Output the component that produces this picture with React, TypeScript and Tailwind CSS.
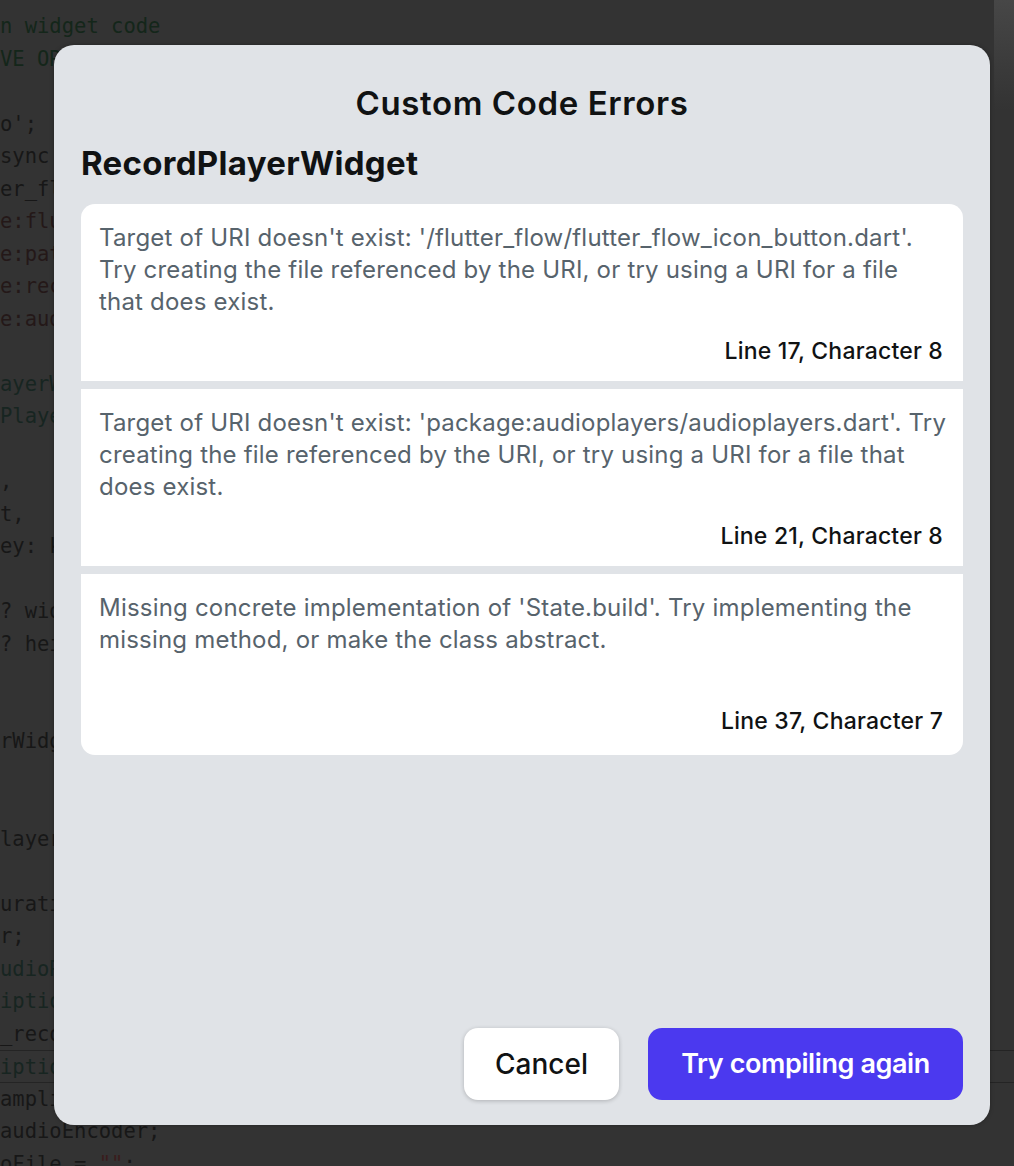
const codeLines: { text: string; color: string }[] = [
  { text: 'n widget code', color: 'text-[#14261a]' },
  { text: 'VE OR MODIFY THE CODE ABOVE!', color: 'text-[#14261a]' },
  { text: '', color: '' },
  { text: "o';", color: 'text-[#171717]' },
  { text: "sync';", color: 'text-[#171717]' },
  { text: "er_flow/flutter_flow_icon_button.dart';", color: 'text-[#171717]' },
  { text: "e:flutter_sound/flutter_sound.dart';", color: 'text-[#241818]' },
  { text: "e:path_provider/path_provider.dart';", color: 'text-[#241818]' },
  { text: "e:record/record.dart';", color: 'text-[#241818]' },
  { text: "e:audioplayers/audioplayers.dart';", color: 'text-[#241818]' },
  { text: '', color: '' },
  { text: 'ayerWidget extends StatefulWidget {', color: 'text-[#172521]' },
  { text: 'PlayerWidget({', color: 'text-[#172521]' },
  { text: '', color: '' },
  { text: ',', color: 'text-[#171717]' },
  { text: 't,', color: 'text-[#171717]' },
  { text: 'ey: key);', color: 'text-[#171717]' },
  { text: '', color: '' },
  { text: '? width;', color: 'text-[#171717]' },
  { text: '? height;', color: 'text-[#171717]' },
  { text: '', color: '' },
  { text: '', color: '' },
  { text: 'rWidget> createState() =>', color: 'text-[#171717]' },
  { text: '', color: '' },
  { text: '', color: '' },
  { text: 'layer;', color: 'text-[#171717]' },
  { text: '', color: '' },
  { text: 'uration;', color: 'text-[#171717]' },
  { text: 'r;', color: 'text-[#171717]' },
  { text: 'udioRecorder;', color: 'text-[#172521]' },
  { text: 'iption;', color: 'text-[#172521]' },
  { text: '_recorder;', color: 'text-[#171717]' },
  { text: 'iption;', color: 'text-[#172521]' },
  { text: 'amplitude;', color: 'text-[#171717]' },
  { text: 'audioEncoder;', color: 'text-[#171717]' },
  { text: 'oFile = "";', color: 'text-[#171717]' },
];

const errors = [
  {
    msg: "Target of URI doesn't exist: '/flutter_flow/flutter_flow_icon_button.dart'. Try creating the file referenced by the URI, or try using a URI for a file that does exist.",
    loc: 'Line 17, Character 8',
  },
  {
    msg: "Target of URI doesn't exist: 'package:audioplayers/audioplayers.dart'. Try creating the file referenced by the URI, or try using a URI for a file that does exist.",
    loc: 'Line 21, Character 8',
  },
  {
    msg: "Missing concrete implementation of 'State.build'. Try implementing the missing method, or make the class abstract.",
    loc: 'Line 37, Character 7',
  },
];

export default function App() {
  return (
    <div className="relative w-full h-[1166px] overflow-hidden bg-[#333333]">
      {/* Editor behind the dialog */}
      <div className="pt-[10px] font-['DejaVu_Sans_Mono',monospace] text-[20.5px] leading-[32.5px] whitespace-pre">
        {codeLines.map((l, i) => (
          <div
            key={i}
            className={`h-[32.5px] ${l.color} ${i === 32 ? 'border-y border-[#242424]' : ''}`}
          >
            {l.text === 'oFile = "";' ? (
              <>
                oFile = <span className="text-[#3a1c1c]">""</span>;
              </>
            ) : (
              l.text
            )}
          </div>
        ))}
      </div>
      <div className="absolute right-0 top-0 w-[20px] h-[110px] bg-gradient-to-b from-[#474747] to-[#333333]" />

      {/* Dialog */}
      <div className="absolute left-[54px] top-[45px] w-[936px] h-[1080px] rounded-[20px] bg-[#E0E3E7] shadow-[0_0_4px_rgba(0,0,0,0.3)] flex flex-col px-[27px] pt-[37px] pb-[25px] font-['Inter',sans-serif]">
        <h1 className="text-center text-[33px] leading-[42px] font-semibold text-[#101213] tracking-[0.6px]">
          Custom Code Errors
        </h1>
        <h2 className="mt-[18px] text-[33px] leading-[42px] font-bold text-[#101213] tracking-[0.3px]">
          RecordPlayerWidget
        </h2>

        <div className="mt-[20px] flex flex-col gap-2 rounded-[14px] overflow-hidden">
          {errors.map((e, i) => (
            <div key={i} className="bg-white pl-[18px] pr-[14px] pt-[18px] pb-[14px] last:pb-[18px]">
              <p className="min-h-[96px] text-[24px] leading-[32px] text-[#57636C] tracking-[0.2px]">{e.msg}</p>
              <p className="mt-[17px] pr-[6px] text-right text-[23px] leading-[32px] font-medium text-[#101213] tracking-[0.2px]">
                {e.loc}
              </p>
            </div>
          ))}
        </div>

        <div className="flex-1" />

        <div className="flex justify-end gap-[29px]">
          <button className="w-[155px] h-[72px] rounded-[14px] bg-white text-[28px] font-medium text-[#101213] shadow-[0_1px_4px_rgba(0,0,0,0.22)]">
            Cancel
          </button>
          <button className="w-[315px] h-[72px] rounded-[14px] bg-[#4B39EF] text-[27px] font-semibold text-white tracking-[-0.4px]">
            Try compiling again
          </button>
        </div>
      </div>
    </div>
  );
}
